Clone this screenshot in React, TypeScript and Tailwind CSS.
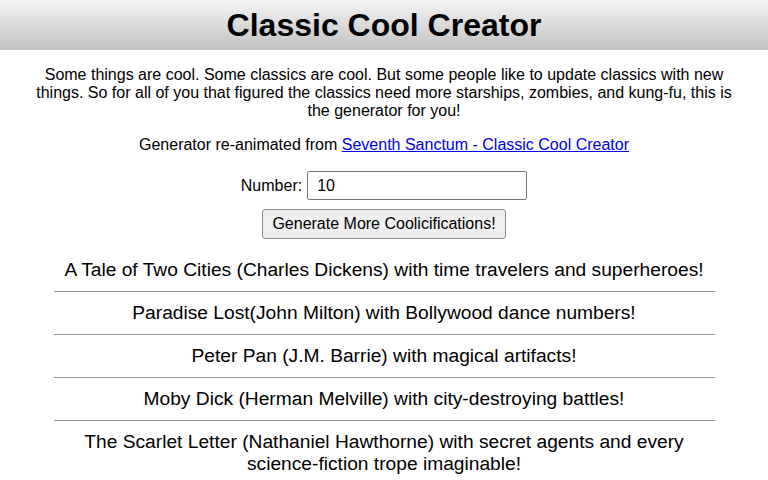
import React from "react";

const ideas = [
  "A Tale of Two Cities (Charles Dickens) with time travelers and superheroes!",
  "Paradise Lost(John Milton) with Bollywood dance numbers!",
  "Peter Pan (J.M. Barrie) with magical artifacts!",
  "Moby Dick (Herman Melville) with city-destroying battles!",
  "The Scarlet Letter (Nathaniel Hawthorne) with secret agents and every science-fiction trope imaginable!",
];

export default function App() {
  return (
    <div
      className="min-h-[480px] bg-white text-black"
      style={{ fontFamily: '"Liberation Sans", Arial, sans-serif' }}
    >
      <header className="h-[50px] flex items-center justify-center bg-gradient-to-b from-[#f4f4f4] to-[#c2c2c2]">
        <h1 className="text-[32px] font-bold leading-none">Classic Cool Creator</h1>
      </header>

      <main className="px-6 text-center text-[16px] leading-[18px]">
        <p className="mt-[16px]">
          Some things are cool. Some classics are cool. But some people like to update classics with new
          things. So for all of you that figured the classics need more starships, zombies, and kung-fu, this is
          the generator for you!
        </p>
        <p className="mt-[16px]">
          Generator re-animated from{" "}
          <a href="#" className="text-[#0000ee] underline">
            Seventh Sanctum - Classic Cool Creator
          </a>
        </p>

        <div className="mt-[17px] flex items-center justify-center gap-[5px]">
          <label htmlFor="num">Number:</label>
          <input
            id="num"
            defaultValue="10"
            className="w-[220px] h-[29px] border border-[#767676] rounded-[2px] px-[9px] text-[16px] outline-none"
          />
        </div>
        <div className="mt-[9px] flex justify-center">
          <button className="h-[30px] w-[244px] bg-[#efefef] border border-[#8a8a8a] rounded-[3px] text-[16px]">
            Generate More Coolicifications!
          </button>
        </div>

        <div className="mt-[10px] mx-auto w-[661px]">
          {ideas.map((idea, i) => (
            <div key={i}>
              <div className="py-[10px] px-[8px] text-[19.2px] leading-[22px]">{idea}</div>
              {i < ideas.length - 1 && <div className="h-px bg-[#999999]" />}
            </div>
          ))}
        </div>
      </main>
    </div>
  );
}
